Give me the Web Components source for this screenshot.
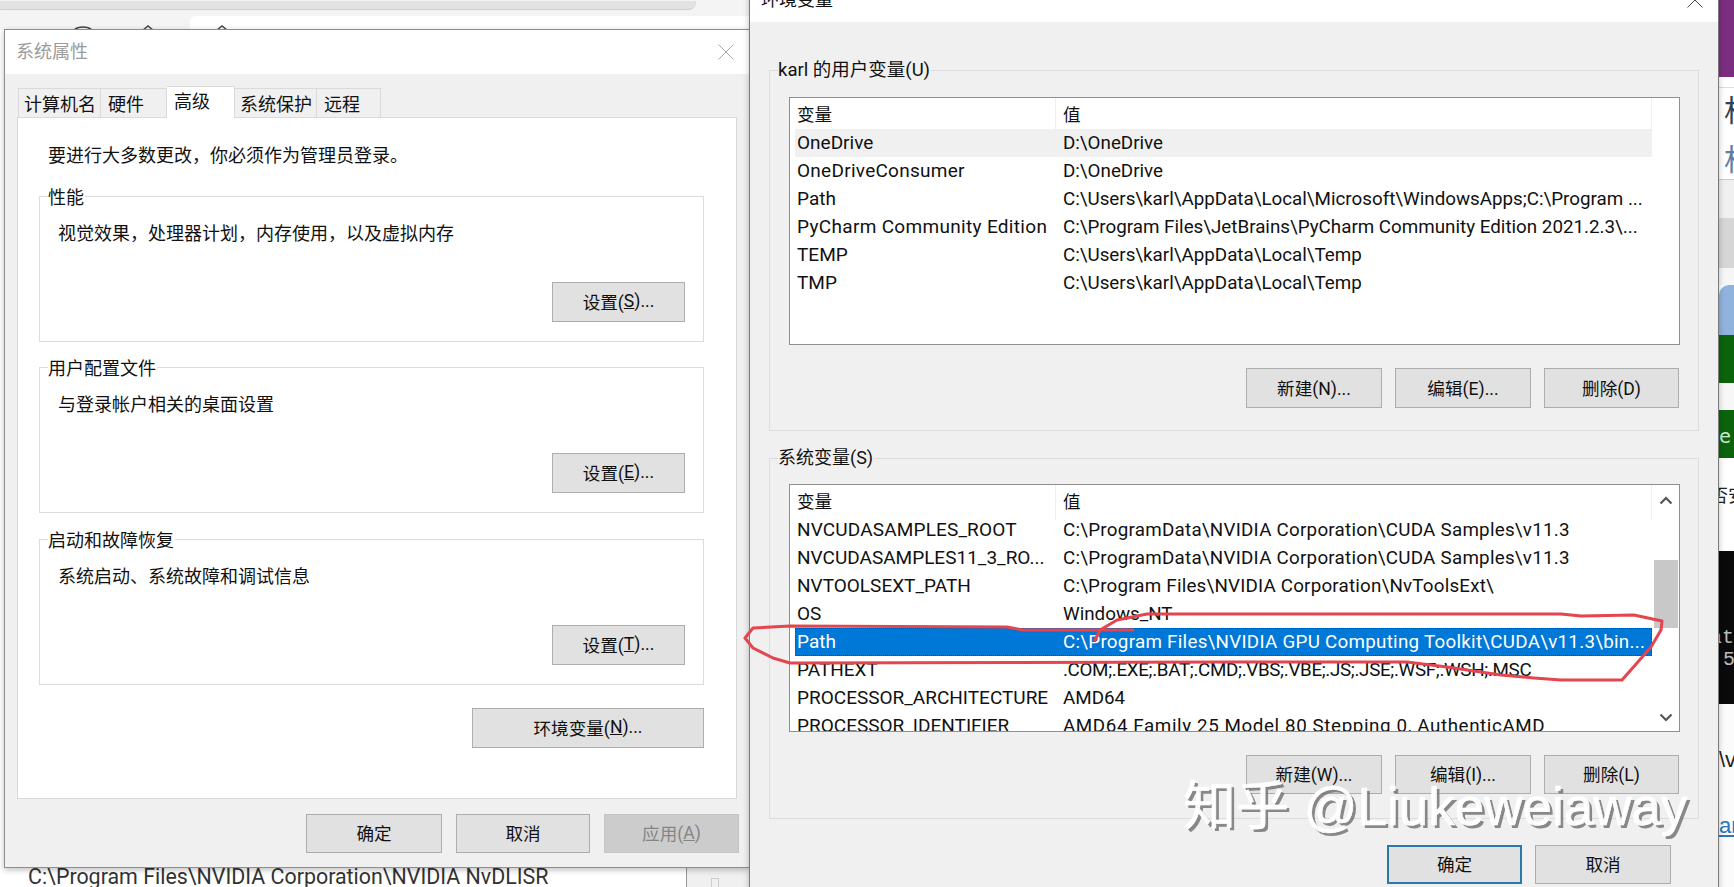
<!DOCTYPE html>
<html lang="zh">
<head>
<meta charset="utf-8">
<title>环境变量</title>
<style>
    html, body { margin: 0; padding: 0; height: 100%; overflow: hidden; background: #fff; }
    body { font-family: Roboto, "Noto Sans CJK SC", sans-serif; font-size: 18px; color: #111; }
</style>
</head>
<body>
<desk-canvas>
    <behind-windows></behind-windows>
    <side-strip></side-strip>

    <win-dialog heading="系统属性" inactive style="left:4px;top:29px;width:746px;height:839px">
        <win-tabs>
            <win-tab style="width:83px">计算机名</win-tab>
            <win-tab style="width:66px;padding-left:7px">硬件</win-tab>
            <win-tab selected style="width:68px">高级</win-tab>
            <win-tab style="width:82px">系统保护</win-tab>
            <win-tab style="width:64px;padding-left:7px">远程</win-tab>
        </win-tabs>
        <tab-panel>
            <group-box legend="性能" style="height:146px;--legend-bg:#fff;--legend-top:-11px">
                <div style="margin-left:18px;margin-top:22px">视觉效果，处理器计划，内存使用，以及虚拟内存</div>
                <button-row style="--row-top:37px"><win-button style="width:133px;height:40px">设置(<u>S</u>)...</win-button></button-row>
            </group-box>
            <group-box legend="用户配置文件" style="height:146px;margin-top:25px;--legend-bg:#fff;--legend-top:-11px">
                <div style="margin-left:18px;margin-top:22px">与登录帐户相关的桌面设置</div>
                <button-row style="--row-top:37px"><win-button style="width:133px;height:40px">设置(<u>E</u>)...</win-button></button-row>
            </group-box>
            <group-box legend="启动和故障恢复" style="height:146px;margin-top:26px;--legend-bg:#fff;--legend-top:-11px">
                <div style="margin-left:18px;margin-top:22px">系统启动、系统故障和调试信息</div>
                <button-row style="--row-top:37px"><win-button style="width:133px;height:40px">设置(<u>T</u>)...</win-button></button-row>
            </group-box>
        </tab-panel>
        <button-row style="--row-gap:14px;--row-right:-2px;--row-top:15px">
            <win-button style="width:136px;height:39px">确定</win-button>
            <win-button style="width:134px;height:39px">取消</win-button>
            <win-button disabled style="width:135px;height:39px">应用(<u>A</u>)</win-button>
        </button-row>
    </win-dialog>

    <win-dialog heading="环境变量" wide style="left:749px;top:-23px;width:970px;height:915px">
        <group-box legend="karl 的用户变量(U)" style="height:361px;--legend-bg:#f0f0f0;--legend-size:18.5px;--legend-top:-13px">
            <var-list style="margin-top:26px">
                <var-row name="OneDrive" value="D:\OneDrive" hover></var-row>
                <var-row name="OneDriveConsumer" value="D:\OneDrive" style="--name-spacing:.27px"></var-row>
                <var-row name="Path" value="C:\Users\karl\AppData\Local\Microsoft\WindowsApps;C:\Program ..."></var-row>
                <var-row name="PyCharm Community Edition" value="C:\Program Files\JetBrains\PyCharm Community Edition 2021.2.3\..." style="--name-spacing:.32px"></var-row>
                <var-row name="TEMP" value="C:\Users\karl\AppData\Local\Temp"></var-row>
                <var-row name="TMP" value="C:\Users\karl\AppData\Local\Temp"></var-row>
            </var-list>
            <button-row style="--row-gap:13px;--row-top:23px;--row-right:19px">
                <win-button style="width:136px;height:40px">新建(N)...</win-button>
                <win-button style="width:136px;height:40px">编辑(E)...</win-button>
                <win-button style="width:135px;height:40px">删除(D)</win-button>
            </button-row>
        </group-box>
        <group-box legend="系统变量(S)" style="height:361px;margin-top:27px;--legend-bg:#f0f0f0;--legend-top:-13px">
            <var-list scrolled style="margin-top:25px">
                <var-row name="NVCUDASAMPLES_ROOT" value="C:\ProgramData\NVIDIA Corporation\CUDA Samples\v11.3" style="--value-spacing:.25px;--name-spacing:.15px"></var-row>
                <var-row name="NVCUDASAMPLES11_3_RO..." value="C:\ProgramData\NVIDIA Corporation\CUDA Samples\v11.3" style="--value-spacing:.25px"></var-row>
                <var-row name="NVTOOLSEXT_PATH" value="C:\Program Files\NVIDIA Corporation\NvToolsExt\" style="--value-spacing:.2px"></var-row>
                <var-row name="OS" value="Windows_NT"></var-row>
                <var-row name="Path" value="C:\Program Files\NVIDIA GPU Computing Toolkit\CUDA\v11.3\bin..." selected style="--value-spacing:.27px"></var-row>
                <var-row name="PATHEXT" value=".COM;.EXE;.BAT;.CMD;.VBS;.VBE;.JS;.JSE;.WSF;.WSH;.MSC" style="--value-spacing:-.33px"></var-row>
                <var-row name="PROCESSOR_ARCHITECTURE" value="AMD64"></var-row>
                <var-row name="PROCESSOR_IDENTIFIER" value="AMD64 Family 25 Model 80 Stepping 0, AuthenticAMD" style="--value-spacing:.6px"></var-row>
            </var-list>
            <button-row style="--row-gap:13px;--row-top:23px;--row-right:19px">
                <win-button style="width:136px;height:39px">新建(W)...</win-button>
                <win-button style="width:136px;height:39px">编辑(I)...</win-button>
                <win-button style="width:135px;height:39px">删除(L)</win-button>
            </button-row>
        </group-box>
        <button-row style="--row-gap:13px;--row-top:26px;--row-right:28px">
            <win-button primary style="width:135px;height:39px">确定</win-button>
            <win-button style="width:136px;height:39px">取消</win-button>
        </button-row>
    </win-dialog>

    <ink-marks></ink-marks>
    <zhihu-mark>知乎 @Liukeweiaway</zhihu-mark>
</desk-canvas>

<script>
// small helper, every element does the same thing on connect
class ShadowEl extends HTMLElement {
    connectedCallback() {
        if (this.shadowRoot) return;
        this.attachShadow({mode: "open"});
        this.shadowRoot.innerHTML = this.markup();
    }
}

class DeskCanvas extends ShadowEl {
    markup() {
        return `<style>
            :host { display: block; position: relative; width: 1734px; height: 887px; overflow: hidden; }
        </style><slot></slot>`;
    }
}

// what can be seen of the browser windows under the two dialogs
class BehindWindows extends ShadowEl {
    markup() {
        return `<style>
            :host { position: absolute; left: 0; top: 0; width: 750px; height: 887px; display: flex; flex-direction: column; background: #fff; }
            .toolbar { height: 30px; background: #f4f4f4; position: relative; overflow: hidden; }
            .address { height: 8px; margin-top: 1px; width: 696px; background: #e3e3e3; border-bottom-right-radius: 8px; box-shadow: 0 1px 1px #ccc; }
            .tab { position: absolute; left: 190px; top: 16px; right: 0; bottom: 0; background: #fff; border-top-left-radius: 6px; }
            svg { position: absolute; left: 0; top: 0; }
            .gap { flex: 1; }
            .output { height: 19px; position: relative; display: flex; }
            .line { font: 21.4px/17px Roboto, sans-serif; color: #333; margin-left: 28px; width: 658px; white-space: nowrap; }
            .bar { flex: 1; background: #f0f0f0; border-left: 1px solid #999; position: relative; }
            .bar i { position: absolute; left: 24px; top: 10px; width: 6px; height: 12px; border: 1px solid #ccc; }
        </style>
        <div class="toolbar">
            <div class="address"></div>
            <div class="tab"></div>
            <svg width="300" height="30" fill="none" stroke="#444" stroke-width="1.5">
                <path d="M74 30a11 7 0 0 1 18 0"/><path d="M143 30l5-4 5 4"/><path d="M217 30l5-4 5 4"/>
            </svg>
        </div>
        <div class="gap"></div>
        <div class="output"><div class="line">C:\\Program Files\\NVIDIA Corporation\\NVIDIA NvDLISR</div><div class="bar"><i></i></div></div>`;
    }
}

// the sliver of an editor page right of the big dialog
class SideStrip extends ShadowEl {
    markup() {
        return `<style>
            :host { position: absolute; left: 1719px; top: 0; width: 15px; height: 887px; display: flex; flex-direction: column; overflow: hidden; background: #fff; }
            div { flex: none; overflow: hidden; white-space: nowrap; }
            .purple { height: 77px; background: #7b2e80; }
            .head { height: 91px; margin-top: 10px; border-top: 1px solid #ddd; border-bottom: 1px solid #ccc; font: 30px/40px "Noto Sans CJK SC", sans-serif; color: #2f4258; padding-left: 5px; }
            .head span { display: block; color: #5c7fa3; margin-top: 9px; }
            .grey1 { height: 38px; background: #f0f0f0; }
            .grey2 { height: 50px; background: #d6d6d6; }
            .white1 { height: 17px; background: #f6f6f6; }
            .tab { height: 50px; background: #8fb3dc; border-top-left-radius: 10px; }
            .green { height: 48px; background: #0b640b; color: #cfeccf; font: 20px/52px "DejaVu Sans Mono", monospace; }
            .white2 { height: 27px; background: #f7f7f7; }
            .ask { height: 93px; font: 18px/72px "Noto Sans CJK SC", sans-serif; color: #222; }
            .ask span { margin-left: -9px; }
            .black { height: 153px; background: #0a0a0a; color: #bbb; font: 20px/22px "Liberation Mono", monospace; padding-top: 76px; box-sizing: border-box; }
            .black span { display: block; margin-left: -9px; }
            .black span + span { margin-left: 4px; }
            .rest { flex: 1; font: 22px/24px "Liberation Sans", sans-serif; color: #222; padding-top: 44px; background: #fbfbfb; }
            .rest a { display: block; margin-top: 42px; color: #2a78b8; text-decoration: underline; }
        </style>
        <div class="purple"></div>
        <div class="head">相<span>相</span></div>
        <div class="grey1"></div>
        <div class="grey2"></div>
        <div class="white1"></div>
        <div class="tab"></div>
        <div class="green"></div>
        <div class="white2"></div>
        <div class="green">e</div>
        <div class="ask"><span>否安</span></div>
        <div class="black"><span>at</span><span>5</span></div>
        <div class="rest">\\v<a>ar</a></div>`;
    }
}

class WinDialog extends ShadowEl {
    markup() {
        const inactive = this.hasAttribute("inactive");
        const inset = this.hasAttribute("wide") ? "0 19px" : "14px 12px 0";
        return `<style>
            :host { position: absolute; display: block; box-sizing: border-box; background: #f0f0f0;
                    border: 1px solid ${inactive ? "#8e8e8e" : "#7a7a7a"}; box-shadow: 0 2px 6px rgba(0,0,0,.25); }
            .title { box-sizing: border-box; height: 44px; background: #fff; display: flex; align-items: center; justify-content: space-between; padding: 0 15px 0 11px;
                     color: ${inactive ? "#9b9b9b" : "#111"}; }
            .title span { margin-top: -4px; }
            .body { padding: ${inset}; display: flow-root; }
            :host([wide]) .body { padding-top: 48px; }
            svg { display: block; }
        </style>
        <div class="title">
            <span>${this.getAttribute("heading")}</span>
            <svg width="16" height="16" viewBox="0 0 16 16" fill="none" stroke="${inactive ? "#a8a8a8" : "#444"}"><path d="M.5.5l15 15M15.500.5l-15 15"/></svg>
        </div>
        <div class="body"><slot></slot></div>`;
    }
}

class WinTabs extends ShadowEl {
    markup() {
        return `<style>
            :host { display: flex; align-items: flex-end; height: 29px; padding-left: 1px; position: relative; z-index: 1; }
        </style><slot></slot>`;
    }
}

class WinTab extends ShadowEl {
    markup() {
        return `<style>
            :host { display: flex; box-sizing: border-box; height: 29px; align-items: center; padding-left: 5px; background: #f0f0f0;
                    border: 1px solid #dadada; border-left: 0; border-bottom: 0; }
            :host(:first-child) { border-left: 1px solid #dadada; }
            :host([selected]) { height: 32px; margin-bottom: -1px; background: #fff; padding: 0 0 6px 7px; }
        </style><slot></slot>`;
    }
}

class TabPanel extends ShadowEl {
    markup() {
        return `<style>
            :host { display: block; box-sizing: border-box; height: 682px; background: #fff; border: 1px solid #d9d9d9; padding: 0 32px 0 21px; }
            .intro { height: 24px; line-height: 24px; margin: 26px 0 28px 9px; }
            .env { display: flex; justify-content: flex-end; margin: 23px 0 0 0; }
        </style>
        <div class="intro">要进行大多数更改，你必须作为管理员登录。</div>
        <slot></slot>
        <div class="env"><win-button style="width:232px;height:40px">环境变量(<u>N</u>)...</win-button></div>`;
    }
}

class GroupBox extends ShadowEl {
    markup() {
        return `<style>
            :host { display: flow-root; box-sizing: border-box; position: relative; border: 1px solid #dcdcdc; }
            .legend { position: absolute; left: 8px; top: var(--legend-top, -12px); line-height: 24px; background: var(--legend-bg, #fff); padding-right: 1px; font-size: var(--legend-size, 18px); }
        </style>
        <div class="legend">${this.getAttribute("legend")}</div>
        <slot></slot>`;
    }
}

class ButtonRow extends ShadowEl {
    markup() {
        return `<style>
            :host { display: flex; justify-content: flex-end; gap: var(--row-gap, 0); margin-top: var(--row-top, 54px); margin-right: var(--row-right, 18px); }
        </style><slot></slot>`;
    }
}

class WinButton extends ShadowEl {
    markup() {
        return `<style>
            :host { display: inline-flex; box-sizing: border-box; align-items: center; justify-content: center; flex: none; font-size: 17.6px; padding-bottom: 2px;
                    background: #e1e1e1; border: 1px solid #adadad; color: #111; }
            :host([disabled]) { background: #cccccc; border-color: #c4c4c4; color: #858585; }
            :host([primary]) { border: 2px solid #2a78ad; }
        </style><slot></slot>`;
    }
}

class VarList extends ShadowEl {
    markup() {
        const scrolled = this.hasAttribute("scrolled");
        return `<style>
            :host { display: block; box-sizing: border-box; position: relative; height: 248px; margin-left: 19px; margin-right: 18px; font-size: 17.6px;
                    background: #fff; border: 1px solid #8f8f8f; overflow: hidden; padding-left: 5px; }
            .head { display: grid; grid-template-columns: 261px 596px; height: 31px; line-height: 35px; }
            .head span:first-child { padding-left: 2px; border-right: 1px solid #eee; }
            .head span + span { padding-left: 7px; border-right: 1px solid #eee; }
            .bar { position: absolute; left: 863px; top: 0; bottom: 0; width: 25px; background: #fff; }
            .bar i { position: absolute; left: 1px; top: 75px; width: 24px; height: 68px; background: #c8c8c8; }
            .bar svg { position: absolute; left: 6px; }
        </style>
        <div class="head"><span>变量</span><span>值</span></div>
        <slot></slot>
        ${scrolled ? `<div class="bar"><i></i>
            <svg style="top:11px" width="14" height="9" fill="none" stroke="#555" stroke-width="2.2"><path d="M1.500 7.500l5.500-5.500 5.500 5.500"/></svg>
            <svg style="top:228px" width="14" height="9" fill="none" stroke="#555" stroke-width="2.2"><path d="M1.500 1.500l5.500 5.500 5.500-5.500"/></svg>
        </div>` : ""}`;
    }
}

class VarRow extends ShadowEl {
    markup() {
        const name = this.getAttribute("name");
        const value = this.getAttribute("value");
        return `<style>
            :host { display: grid; grid-template-columns: 261px 596px; height: 28px; line-height: 28px; white-space: nowrap; font-size: 19px; width: 857px; overflow: hidden; }
            :host([hover]) { background: #f0f0f0; }
            :host([selected]) { background: #0078d7; color: #fff; outline: 1px dotted #444; outline-offset: -1px; }
            .name { padding-left: 2px; overflow: hidden; letter-spacing: var(--name-spacing, 0); }
            .value { padding-left: 7px; overflow: hidden; font-size: 18.8px; letter-spacing: var(--value-spacing, 0); }
        </style><span class="name">${name}</span><span class="value">${value}</span>`;
    }
}

// red pen loop drawn by hand over the Path row
class InkMarks extends ShadowEl {
    markup() {
        return `<style>
            :host { position: absolute; left: 0; top: 0; width: 1734px; height: 887px; pointer-events: none; }
        </style>
        <svg width="1734" height="887" fill="none" stroke="#e4454f" stroke-width="3" stroke-linejoin="round" stroke-linecap="round">
            <path d="M1133 630H1023L1007 627 790 626 753 628 745 638 753 648 773 658 790 663 1234 662 1407 662 1447 667 1501 675 1534 678 1561 680H1622L1637 663 1651 647 1661 630 1662 621 1634 615 1581 616 1561 614H1147L1117 620 1100 630 1095 640"/>
        </svg>`;
    }
}

class ZhihuMark extends ShadowEl {
    markup() {
        return `<style>
            :host { position: absolute; left: 1183px; top: 775px; font: 53px/64px "Liberation Sans", "Noto Sans CJK SC", sans-serif; color: rgba(255,255,255,.96);
                    -webkit-text-stroke: .6px #fff; text-shadow: 3px 3px 0 rgba(110,110,110,.8); white-space: nowrap; pointer-events: none; }
        </style><slot></slot>`;
    }
}

customElements.define("desk-canvas", DeskCanvas);
customElements.define("behind-windows", BehindWindows);
customElements.define("side-strip", SideStrip);
customElements.define("win-dialog", WinDialog);
customElements.define("win-tabs", WinTabs);
customElements.define("win-tab", WinTab);
customElements.define("tab-panel", TabPanel);
customElements.define("group-box", GroupBox);
customElements.define("button-row", ButtonRow);
customElements.define("win-button", WinButton);
customElements.define("var-list", VarList);
customElements.define("var-row", VarRow);
customElements.define("ink-marks", InkMarks);
customElements.define("zhihu-mark", ZhihuMark);
</script>
</body>
</html>
